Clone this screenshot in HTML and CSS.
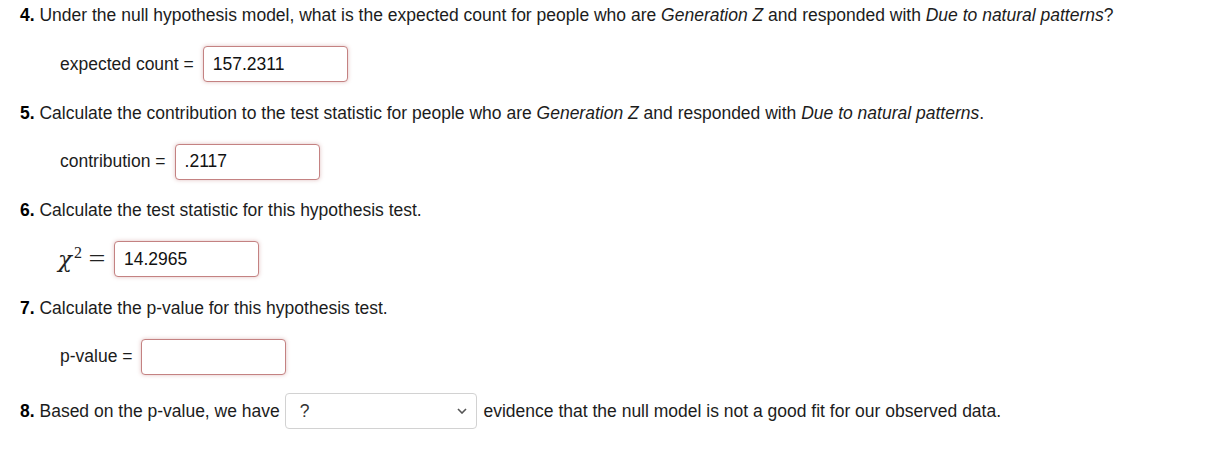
FILE: index.html
```html
<!DOCTYPE html>
<html>
<head>
<meta charset="utf-8">
<link rel="stylesheet" href="styles.css">
</head>
<body>
<div class="page">
  <div class="question">
    <p class="prompt"><b>4.</b> Under the null hypothesis model, what is the expected count for people who are <i>Generation Z</i> and responded with <i>Due to natural patterns</i>?</p>
    <div class="answer"><span class="label">expected count =</span><span class="field">157.2311</span></div>
  </div>
  <div class="question">
    <p class="prompt"><b>5.</b> Calculate the contribution to the test statistic for people who are <i>Generation Z</i> and responded with <i>Due to natural patterns</i>.</p>
    <div class="answer"><span class="label">contribution =</span><span class="field">.2117</span></div>
  </div>
  <div class="question">
    <p class="prompt"><b>6.</b> Calculate the test statistic for this hypothesis test.</p>
    <div class="answer"><span class="math"><i class="chi">χ</i><span class="sq">2</span><span class="eq">=</span></span><span class="field">14.2965</span></div>
  </div>
  <div class="question">
    <p class="prompt"><b>7.</b> Calculate the p-value for this hypothesis test.</p>
    <div class="answer"><span class="label">p-value =</span><span class="field"></span></div>
  </div>
  <div class="question last">
    <p class="prompt"><b>8.</b> Based on the p-value, we have <span class="select"><span class="sel-text">?</span><svg class="chev" width="10" height="6" viewBox="0 0 10 6"><path d="M1 1 L5 5 L9 1" fill="none" stroke="#555" stroke-width="1.6"/></svg></span> evidence that the null model is not a good fit for our observed data.</p>
  </div>
</div>
</body>
</html>
```

FILE: styles.css
```css
html, body {
  margin: 0;
  padding: 0;
  background: #fff;
}
.page {
  padding: 5px 20px 0 20px;
  font-family: "Liberation Sans", Arial, sans-serif;
  font-size: 17.5px;
  color: #1c1c1c;
}
.question {
  margin-bottom: 20.5px;
}
.prompt {
  margin: 0;
  line-height: 20px;
  white-space: nowrap;
}
.prompt b {
  font-weight: bold;
  color: #000;
}
.answer {
  margin-top: 21px;
  padding-left: 40px;
  display: flex;
  align-items: center;
  height: 36px;
}
.label {
  margin-right: 9px;
}
.field {
  box-sizing: border-box;
  width: 145px;
  height: 36px;
  border: 1px solid #c48282;
  border-radius: 4px;
  box-shadow: 0 0 4px rgba(180, 100, 100, 0.4);
  padding: 0 9px;
  display: flex;
  align-items: center;
  background: #fff;
  color: #111;
}
.math {
  font-family: "Liberation Serif", serif;
  display: flex;
  align-items: baseline;
  margin-left: -2px;
  margin-right: 10px;
  color: #222;
  height: 36px;
  padding-top: 6px;
  box-sizing: border-box;
}
.chi {
  font-family: "DejaVu Serif", serif;
  font-size: 23px;
  font-style: italic;
  line-height: 24px;
}
.sq {
  font-size: 16px;
  position: relative;
  top: -9px;
  margin-left: 2px;
}
.eq {
  margin-left: 8px;
  font-size: 25px;
  line-height: 24px;
  transform: scaleX(1.2);
}
.last {
  margin-top: -2px;
}
.last .prompt {
  line-height: 36px;
}
.select {
  box-sizing: border-box;
  display: inline-flex;
  align-items: center;
  justify-content: space-between;
  vertical-align: middle;
  width: 192px;
  height: 36px;
  border: 1px solid #d2d2d2;
  border-radius: 4px;
  padding: 0 9px 0 14px;
  margin: -2px 2px 0 0;
  line-height: 20px;
  color: #333;
}
.chev {
  display: block;
}
```
